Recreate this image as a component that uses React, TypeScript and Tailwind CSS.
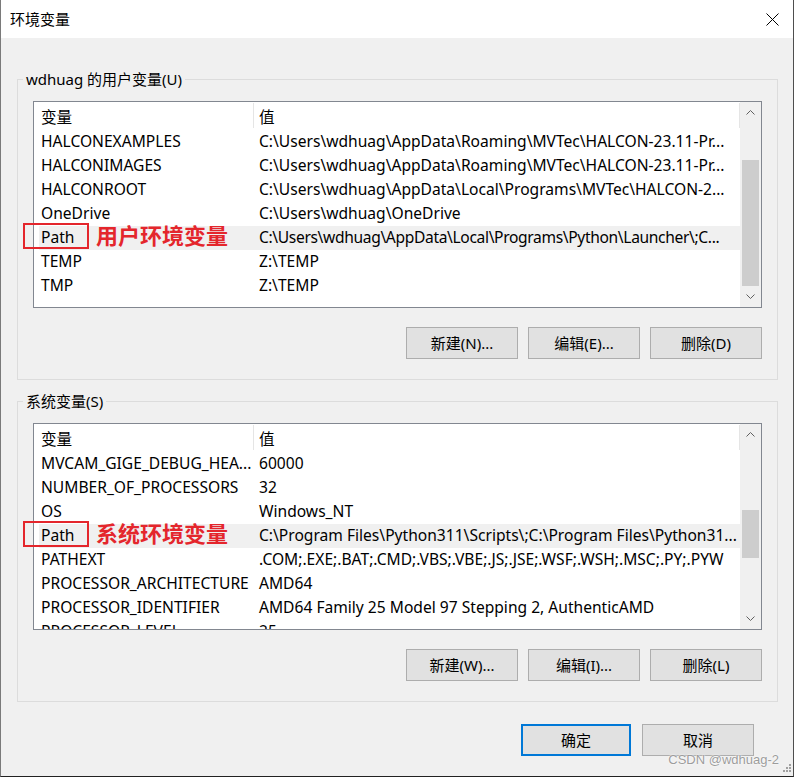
import React from 'react';

type Row = [string, string, boolean?];

const userVars: Row[] = [
  ['HALCONEXAMPLES', 'C:\\Users\\wdhuag\\AppData\\Roaming\\MVTec\\HALCON-23.11-Pr...'],
  ['HALCONIMAGES', 'C:\\Users\\wdhuag\\AppData\\Roaming\\MVTec\\HALCON-23.11-Pr...'],
  ['HALCONROOT', 'C:\\Users\\wdhuag\\AppData\\Local\\Programs\\MVTec\\HALCON-2...'],
  ['OneDrive', 'C:\\Users\\wdhuag\\OneDrive'],
  ['Path', 'C:\\Users\\wdhuag\\AppData\\Local\\Programs\\Python\\Launcher\\;C...', true],
  ['TEMP', 'Z:\\TEMP'],
  ['TMP', 'Z:\\TEMP'],
];

const sysVars: Row[] = [
  ['MVCAM_GIGE_DEBUG_HEA...', '60000'],
  ['NUMBER_OF_PROCESSORS', '32'],
  ['OS', 'Windows_NT'],
  ['Path', 'C:\\Program Files\\Python311\\Scripts\\;C:\\Program Files\\Python31...'],
  ['PATHEXT', '.COM;.EXE;.BAT;.CMD;.VBS;.VBE;.JS;.JSE;.WSF;.WSH;.MSC;.PY;.PYW'],
  ['PROCESSOR_ARCHITECTURE', 'AMD64'],
  ['PROCESSOR_IDENTIFIER', 'AMD64 Family 25 Model 97 Stepping 2, AuthenticAMD'],
  ['PROCESSOR_LEVEL', '25'],
];

function Chevron({ up }: { up?: boolean }) {
  return (
    <svg width="9" height="5" viewBox="0 0 9 5" fill="none" stroke="#606060" strokeWidth="1">
      <polyline points={up ? '0.5,4.5 4.5,0.5 8.5,4.5' : '0.5,0.5 4.5,4.5 8.5,0.5'} />
    </svg>
  );
}

type ListProps = {
  rows: Row[];
  highlight: number;
  thumbTop: number;
  thumbHeight: number;
  note: string;
};

function VarList({ rows, highlight, thumbTop, thumbHeight, note }: ListProps) {
  const rowTop = 28 + highlight * 24;
  return (
    <div className="relative flex h-[207px] border border-[#828790] bg-white text-[15.6px]">
      <div className="flex min-w-0 flex-1 flex-col overflow-hidden">
        {/* header */}
        <div className="flex h-[28px] shrink-0 items-center">
          <div className="flex h-full w-[219px] items-center pl-[7px] pt-[3px]">变量</div>
          <span className="mb-[1px] h-[25px] w-px bg-[#e5e5e5]" />
          <div className="flex h-full flex-1 items-center pl-[5px] pt-[3px]">值</div>
          <span className="mb-[1px] h-[25px] w-px bg-[#e5e5e5]" />
        </div>
        {rows.map(([name, value, tight], i) => (
          <div
            key={name + i}
            className={`ml-[5px] flex h-[24px] shrink-0 items-center whitespace-nowrap ${i === highlight ? 'bg-[#f0f0f0]' : ''}`}
          >
            <div className="w-[215px] shrink-0 overflow-hidden pl-[2px]">{name}</div>
            <div
              className={`min-w-0 flex-1 overflow-hidden text-ellipsis pl-[5px] ${tight ? 'tracking-[-0.35px]' : ''}`}
            >
              {value}
            </div>
          </div>
        ))}
      </div>

      {/* scrollbar */}
      <div className="flex w-[21px] shrink-0 flex-col bg-[#f0f0f0]">
        <div className="flex h-[21px] items-center justify-center">
          <Chevron up />
        </div>
        <div className="flex-1 px-[2px]">
          <div className="bg-[#cdcdcd]" style={{ marginTop: thumbTop, height: thumbHeight }} />
        </div>
        <div className="flex h-[21px] items-center justify-center">
          <Chevron />
        </div>
      </div>

      {/* red annotation */}
      <div
        className="absolute left-[-11px] h-[26px] w-[66px] border-2 border-[#e4262c]"
        style={{ top: rowTop - 3 }}
      />
      <div
        className="absolute left-[62px] whitespace-nowrap text-[22px] font-bold leading-[26px] text-[#e4262c]"
        style={{ top: rowTop - 4 }}
      >
        {note}
      </div>
    </div>
  );
}

function Btn({ label, primary }: { label: string; primary?: boolean }) {
  return (
    <button
      className={`flex h-[32px] items-center justify-center bg-[#e1e1e1] text-black ${
        primary ? 'w-[110px] border-2 border-[#0078d7]' : 'w-[112px] border border-[#adadad]'
      }`}
    >
      {label}
    </button>
  );
}

function Group({
  title,
  children,
  buttons,
  className = '',
}: {
  title: string;
  children: React.ReactNode;
  buttons: string[];
  className?: string;
}) {
  return (
    <fieldset className={`ml-[16px] w-[761px] min-w-0 border border-[#dcdcdc] px-[15px] pb-[20px] ${className}`}>
      <legend className="ml-[-10px] px-[3px] leading-[21px]">{title}</legend>
      <div className="pt-[11px]">{children}</div>
      <div className="mt-[19px] flex justify-end gap-[10px]">
        {buttons.map((b) => (
          <Btn key={b} label={b} />
        ))}
      </div>
    </fieldset>
  );
}

export default function App() {
  return (
    <div className="relative flex h-[777px] w-[794px] flex-col overflow-hidden border-b border-l border-r border-b-[#222] border-l-[#7a7a7a] border-r-[#4e4e4e] bg-[#f0f0f0] font-['Noto_Sans','Noto_Sans_CJK_SC',sans-serif] text-[15px] text-black">
      {/* title bar */}
      <div className="flex h-[38px] shrink-0 items-center justify-between bg-white">
        <span className="ml-[9px] font-['Noto_Sans_CJK_SC',sans-serif]">环境变量</span>
        <svg className="mr-[14px]" width="13" height="13" viewBox="0 0 13 13" stroke="#000" strokeWidth="1">
          <line x1="0.5" y1="0.5" x2="12.5" y2="12.5" />
          <line x1="12.5" y1="0.5" x2="0.5" y2="12.5" />
        </svg>
      </div>

      <Group title="wdhuag 的用户变量(U)" buttons={['新建(N)...', '编辑(E)...', '删除(D)']} className="mt-[31px]">
        <VarList rows={userVars} highlight={4} thumbTop={37} thumbHeight={126} note="用户环境变量" />
      </Group>

      <Group title="系统变量(S)" buttons={['新建(W)...', '编辑(I)...', '删除(L)']} className="mt-[11px]">
        <VarList rows={sysVars} highlight={3} thumbTop={65} thumbHeight={48} note="系统环境变量" />
      </Group>

      <div className="mr-[39px] mt-[22px] flex justify-end gap-[11px]">
        <Btn label="确定" primary />
        <Btn label="取消" />
      </div>

      {/* watermark */}
      <div className="absolute bottom-[8px] right-[14px] font-['Liberation_Sans',sans-serif] text-[13px] leading-[16px] text-[#9c9c9c] [text-shadow:0_0_2px_#fff,0_0_1px_#fff]">
        CSDN @wdhuag-2
      </div>
      {/* size grip */}
      <svg className="absolute bottom-[3px] right-[1px]" width="10" height="10" viewBox="0 0 10 10" fill="#a0a0a0">
        <rect x="7" y="1" width="2" height="2" />
        <rect x="4" y="4" width="2" height="2" />
        <rect x="7" y="4" width="2" height="2" />
        <rect x="1" y="7" width="2" height="2" />
        <rect x="4" y="7" width="2" height="2" />
        <rect x="7" y="7" width="2" height="2" />
      </svg>
    </div>
  );
}
